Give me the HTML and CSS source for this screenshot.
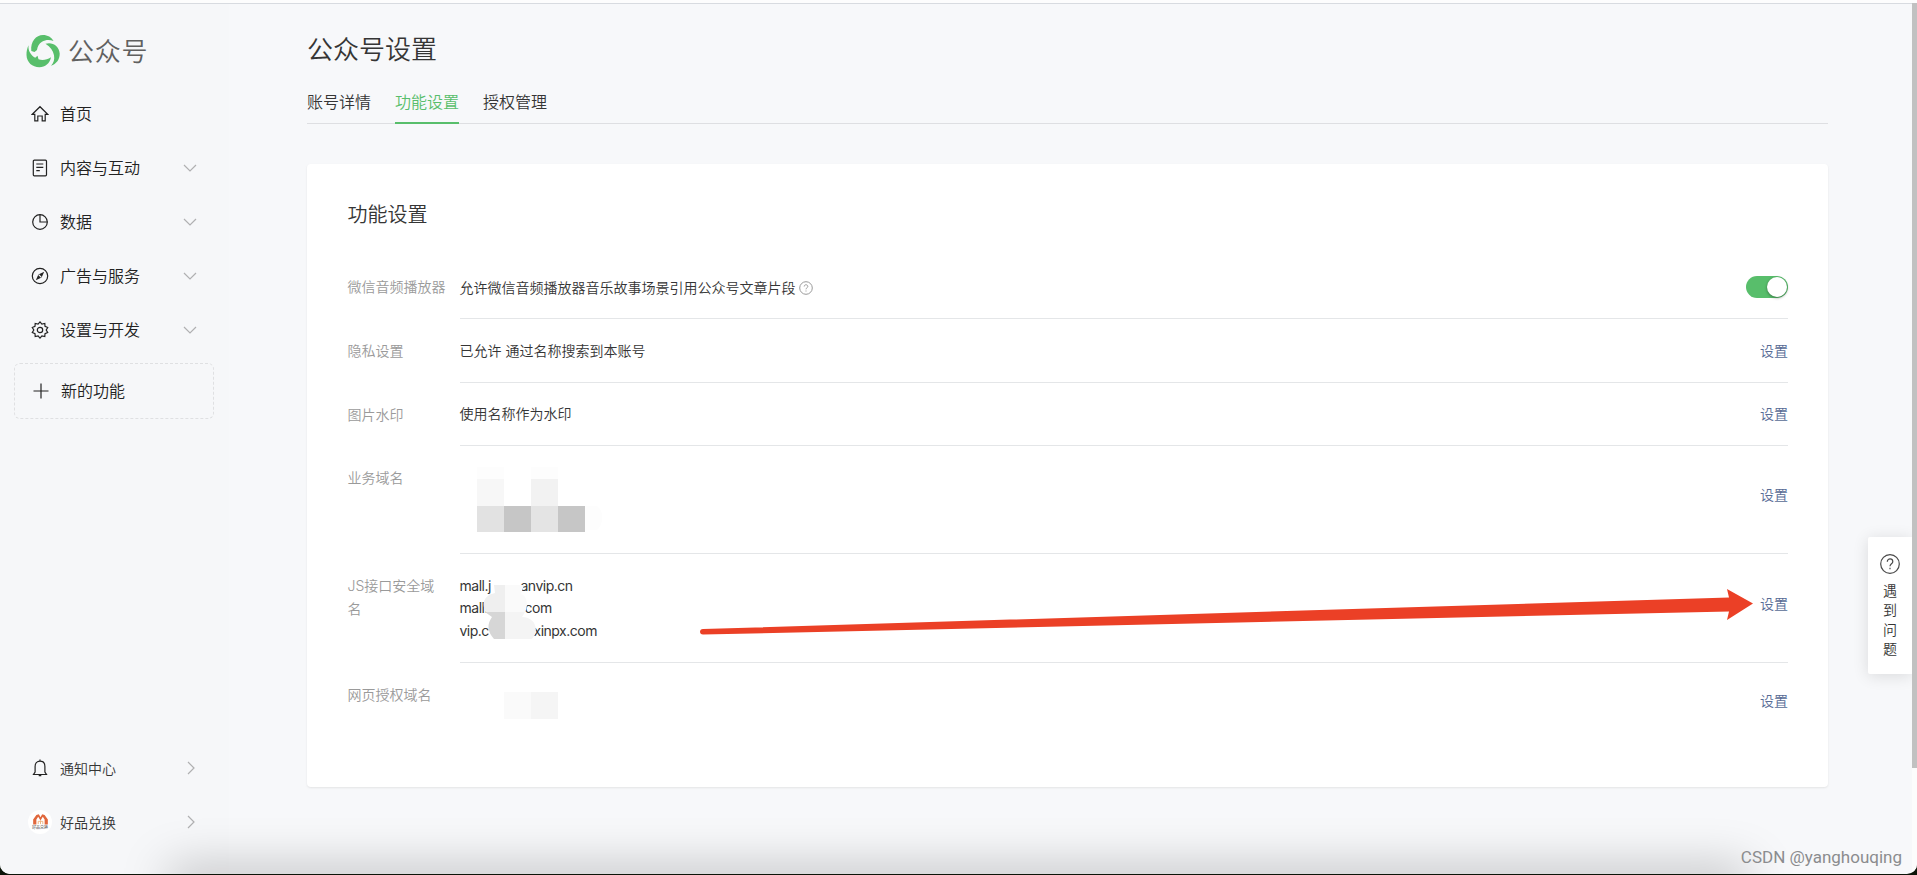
FILE: index.html
```
<!DOCTYPE html>
<html lang="zh-CN">
  <head>
    <meta charset="UTF-8" />
    <meta name="viewport" content="width=device-width, initial-scale=1" />
    <title>公众号</title>
    <link rel="stylesheet" href="styles.css">
  </head>
  <body>
    <div class="window">
      <aside class="sidebar">
        <div class="logo">
          <svg width="34" height="34" viewBox="0 0 34 34" fill="#58be6b">
            <path d="M5.300 17C4.300 7.500 10 1 17 1c4.500 0 8.700 2.300 10.500 6-3.500-1.500-8-1.500-11.500.8-3 2-4.500 4.500-5 8.200L8.500 18z" />
            <path d="M19.500 9.800c6.500-2 13.700 1.700 14.200 9.800.2 5.800-3.300 10.500-8.700 12.200 2.700-3 3.800-6.500 3-10.500-.8-4.500-3.500-8.200-8.500-11.500z" />
            <path d="M2.500 11.300c-.5 5.500 2.200 9.800 6.700 12.500l2.300-2 1 3.500c4 1.300 8.300.6 12.500-2-1.200 6.300-5.900 9.900-11.500 9.900C6.500 33.300.7 28.500.5 21c-.1-3.500.7-6.800 2-9.700z" />
          </svg>
          <span>公众号</span>
        </div>

        <nav class="menu">
          <a class="item">
            <svg class="icon" viewBox="0 0 18 18"><path d="M1.300 9.300 9 1.700l7.700 7.600h-2.500v6.500h-3V11H6.800v4.800h-3V9.300z" /></svg>
            <span>首页</span>
          </a>
          <a class="item">
            <svg class="icon" viewBox="0 0 18 18"><rect x="2.300" y="1.200" width="13.200" height="15.600" rx="1" /><path d="M5.300 5h7M5.300 8.300h7M5.300 11.600h3.500" /></svg>
            <span>内容与互动</span>
            <svg class="arrow" viewBox="0 0 14 14"><path d="m1 4 6 6 6-6" /></svg>
          </a>
          <a class="item">
            <svg class="icon" viewBox="0 0 18 18"><circle cx="9" cy="9" r="7.300" /><path d="M9 1.500V9h7.500" /></svg>
            <span>数据</span>
            <svg class="arrow" viewBox="0 0 14 14"><path d="m1 4 6 6 6-6" /></svg>
          </a>
          <a class="item">
            <svg class="icon" viewBox="0 0 18 18"><circle cx="9" cy="9" r="7.700" /><path class="solid" d="m13.200 4.800-2.600 5.800-5.800 2.600 2.600-5.800z" /><path class="needle" d="m7.600 7.600 2.800 2.800" /></svg>
            <span>广告与服务</span>
            <svg class="arrow" viewBox="0 0 14 14"><path d="m1 4 6 6 6-6" /></svg>
          </a>
          <a class="item">
            <svg class="icon" viewBox="0 0 18 18"><path d="M9 .9 10.900 3.100 13.800 2.500 14 5.400 16.700 6.500 15.200 9 16.700 11.500 14 12.600 13.800 15.500 10.900 14.900 9 17.100 7.100 14.900 4.200 15.500 4 12.600 1.300 11.500 2.800 9 1.300 6.500 4 5.400 4.200 2.500 7.100 3.100z" /><circle cx="9" cy="9" r="2.700" /></svg>
            <span>设置与开发</span>
            <svg class="arrow" viewBox="0 0 14 14"><path d="m1 4 6 6 6-6" /></svg>
          </a>
        </nav>

        <a class="new">
          <svg class="icon" viewBox="0 0 18 18"><path d="M9 1.500v15M1.500 9h15" /></svg>
          <span>新的功能</span>
        </a>

        <div class="bottom">
          <a class="item">
            <svg class="icon" viewBox="0 0 18 18"><path d="M2.500 15.500h13L13.900 13V7.500C13.900 4.300 12 2.200 9 2.200S4.100 4.300 4.100 7.500V13zM9 .4v1.800M7.700 16.700h2.600" /></svg>
            <span>通知中心</span>
            <svg class="arrow" viewBox="0 0 14 14"><path d="m4 1 6 6-6 6" /></svg>
          </a>
          <a class="item">
            <span class="avatar">
              <svg width="15" height="11" viewBox="0 0 16 12"><path d="M0 11.500V6l3.500-5 2.700-.8L8 3.500 9.800.2l2.700.8L16 6v5.500h-3.500V6L10.500 3 8 7 5.500 3l-2 3v5.500z" fill="#e0673c" /><path d="M5.500 11V8h5v3M8 7v4" stroke="#eeb27c" fill="none" /></svg>
              <small>好品兑换</small>
            </span>
            <span>好品兑换</span>
            <svg class="arrow" viewBox="0 0 14 14"><path d="m4 1 6 6-6 6" /></svg>
          </a>
        </div>
      </aside>

      <main class="main">
        <h1>公众号设置</h1>
        <div class="tabs">
          <a>账号详情</a>
          <a class="current">功能设置</a>
          <a>授权管理</a>
        </div>

        <section class="card">
          <h2>功能设置</h2>
          <div class="row first">
            <label>微信音频播放器</label>
            <div class="value">
              <p>允许微信音频播放器音乐故事场景引用公众号文章片段</p>
              <svg class="tip" viewBox="0 0 14 14"><circle cx="7" cy="7" r="6.300" /><path d="M5.200 5.500c0-2.300 3.600-2.300 3.600 0C8.800 6.800 7 6.800 7 8.300M7 9.500v1" /></svg>
              <span class="switch"></span>
            </div>
          </div>
          <div class="row">
            <label>隐私设置</label>
            <div class="value"><p>已允许 通过名称搜索到本账号</p><a>设置</a></div>
          </div>
          <div class="row">
            <label>图片水印</label>
            <div class="value"><p>使用名称作为水印</p><a>设置</a></div>
          </div>
          <div class="row tall">
            <label>业务域名</label>
            <div class="value">
              <svg class="mosaic" width="150" height="68" viewBox="0 0 150 68">
                <path fill="#fdfdfd" d="M17 1h27v12H17zM71 1h27v12H71zM125 40h12c7 5 7 18 0 24h-12z" />
                <path fill="#f7f7f7" d="M17 13h27v27H17z" />
                <path fill="#f2f2f2" d="M71 13h27v27H71z" />
                <path fill="#e2e2e2" d="M17 40h27v26H17z" />
                <path fill="#c6c6c6" d="M44 40h27v26H44zM98 40h27v26H98z" />
                <path fill="#e4e4e4" d="M71 40h27v26H71z" />
              </svg>
              <a>设置</a>
            </div>
          </div>
          <div class="row tall">
            <label>JS接口安全域名</label>
            <div class="value">
              <div class="domains">
                <p><span class="start">mall.j</span><span>anvip.cn</span></p>
                <p><span class="start">mall.</span><span>com</span></p>
                <p><span class="start">vip.c</span><span>xinpx.com</span></p>
                <svg class="smudge" width="54" height="56" viewBox="0 0 54 56">
                  <path fill="#efefef" d="M11 1h11v27H3C-2 20 1 11 12 9z" />
                  <path fill="#fafafa" d="M22 1h19l-3 9c7 2 7 13 4 18H22z" />
                  <path fill="#d6d6d6" d="M22 28v27H11C4 47 4 40 9 33L2 28z" />
                  <path fill="#f4f4f4" d="M22 28h20l-3 5c13 0 18 13 10 22H22z" />
                </svg>
              </div>
              <a>设置</a>
            </div>
          </div>
          <div class="row last">
            <label>网页授权域名</label>
            <div class="value">
              <svg class="mosaic" width="130" height="40" viewBox="0 0 130 40">
                <path fill="#fafafa" d="M44 11h27v27H44z" />
                <path fill="#f5f5f5" d="M71 11h27v27H71z" />
              </svg>
              <a>设置</a>
            </div>
          </div>
        </section>
      </main>

      <div class="help">
        <svg width="22" height="22" viewBox="0 0 22 22"><circle cx="11" cy="11" r="9.300" /><path d="M8.300 8.700c0-3.700 5.500-3.700 5.500 0 0 2-2.800 2.200-2.800 4.500M11 14.700v1.500" /></svg>
        <span>遇到问题</span>
      </div>

      <div class="scrollbar"></div>
      <div class="shade"></div>

      <svg class="pointer" width="1056" height="48" viewBox="0 0 1056 48">
        <path fill="#eb4026" d="M3 40 1029 8.500 1027 0l26 14.500-26 16.500 2-8.500L3 45.500c-4 0-4-5.500 0-5.500z" />
      </svg>
      <div class="watermark">CSDN @yanghouqing</div>
    </div>
  </body>
</html>
```
FILE: styles.css
```
* {
  box-sizing: border-box;
}
body {
  margin: 0;
  height: 875px;
  overflow: hidden;
  background: #0c1408;
  color: #353535;
  font-family: Inter, "Noto Sans CJK SC", sans-serif;
  font-size: 14px;
  font-weight: 350;
}
h1,
h2,
p {
  margin: 0;
  font-weight: inherit;
}
svg {
  flex: none;
}
.window {
  position: relative;
  display: flex;
  height: 874px;
  overflow: hidden;
  background: #f7f8fa;
  border-radius: 0 0 10px 10px;
}
.window::before {
  content: "";
  position: absolute;
  top: 0;
  left: 0;
  right: 0;
  height: 3px;
  background: #fdfdfd;
  border-bottom: 1px solid #d8dbe0;
}

/* sidebar */
.sidebar {
  display: flex;
  flex-direction: column;
  width: 229px;
  padding: 34px 15px 25px 14px;
  background: #f6f7f9;
}
.logo {
  display: flex;
  align-items: center;
  gap: 8px;
  height: 34px;
  padding-left: 12px;
  margin-bottom: 19px;
  color: #606060;
  font-size: 26px;
  letter-spacing: 0.8px;
}
.logo span {
  padding-bottom: 4px;
}
.item {
  display: flex;
  align-items: center;
  height: 54px;
  padding: 0 16px 0 17px;
  font-size: 16px;
  color: #222;
}
.menu span,
.new span {
  padding-bottom: 2px;
}
.icon {
  width: 18px;
  height: 18px;
  margin-right: 11px;
  fill: none;
  stroke: #222;
  stroke-width: 1.2;
}
.solid {
  fill: #222;
  stroke: none;
}
.needle {
  stroke: #f6f7f9;
}
.arrow {
  width: 14px;
  height: 14px;
  margin-left: auto;
  fill: none;
  stroke: #b0b0b2;
  stroke-width: 1.2;
}
.menu .arrow {
  margin-right: 1px;
}
.new {
  display: flex;
  align-items: center;
  height: 56px;
  margin-top: 6px;
  padding-left: 17px;
  border: 1px dashed #dfe0e2;
  border-radius: 6px;
  font-size: 16px;
  color: #222;
}
.bottom {
  margin-top: auto;
}
.bottom .item {
  font-size: 14px;
  color: #353535;
}
.avatar {
  display: flex;
  flex-direction: column;
  align-items: center;
  justify-content: center;
  width: 24px;
  height: 24px;
  margin: 0 8px 0 -3px;
  background: #fff;
  border-radius: 50%;
}
.avatar small {
  font-size: 4px;
  line-height: 6px;
  white-space: nowrap;
}

/* main area */
.main {
  width: 1599px;
  padding: 29px 0 0 78px;
}
h1 {
  font-size: 26px;
  line-height: 42px;
}
.tabs {
  display: flex;
  gap: 24px;
  height: 43px;
  margin-top: 10px;
  border-bottom: 1px solid #dedfe2;
  font-size: 16px;
  line-height: 42px;
}
.tabs .current {
  height: 43px;
  color: #58be6b;
  border-bottom: 2px solid #58be6b;
}
.card {
  height: 623px;
  margin-top: 40px;
  padding: 36px 40px 0 40.5px;
  background: #fff;
  border-radius: 4px;
  box-shadow: 0 1px 2px rgba(150, 150, 150, 0.2);
}
h2 {
  margin-bottom: -1px;
  font-size: 20px;
  line-height: 30px;
}
.row {
  display: flex;
  height: 64px;
}
.row label {
  width: 112px;
  padding: 20px 22px 0 0;
  line-height: 23px;
  color: #9a9a9a;
}
.value {
  display: flex;
  align-items: center;
  flex: 1;
  padding-bottom: 2px;
  border-bottom: 1px solid #e4e6e8;
}
.value a {
  margin-left: auto;
  color: #576b95;
}
.first {
  height: 90px;
}
.first label {
  padding: 46px 0 0;
}
.first .value {
  padding-top: 28px;
}
.row + .row + .row {
  height: 63px;
}
.row.tall.tall {
  height: 108px;
}
.tall + .row.tall {
  height: 109px;
}
.tall a {
  padding-bottom: 9px;
}
.row.last.last {
  height: 75px;
}
.last .value {
  border: 0;
}
.mosaic {
  margin-top: 3px;
}
.tip {
  width: 14px;
  height: 14px;
  margin: 2px 0 0 3px;
  fill: none;
  stroke: #9a9a9a;
}
.switch {
  display: flex;
  justify-content: flex-end;
  width: 42px;
  height: 22px;
  margin-left: auto;
  padding: 1px;
  background: #58be6b;
  border-radius: 11px;
}
.switch::after {
  content: "";
  width: 20px;
  height: 20px;
  background: #fff;
  border-radius: 50%;
  box-shadow: 0 1px 3px rgba(0, 0, 0, 0.4);
}
.domains {
  position: relative;
  padding-top: 3px;
  line-height: 22.6px;
  font-weight: 400;
  letter-spacing: -0.5px;
}
.domains p {
  display: flex;
}
.start {
  width: 61px;
}
.domains p:nth-child(2) .start {
  width: 65px;
}
.domains p:nth-child(3) .start {
  width: 74px;
}
.smudge {
  position: absolute;
  left: 23px;
  top: 12px;
}

/* floating parts */
.help {
  position: absolute;
  top: 537px;
  right: 5px;
  display: flex;
  flex-direction: column;
  align-items: center;
  width: 44px;
  height: 137px;
  padding-top: 16px;
  background: #fff;
  border-radius: 2px 0 0 2px;
  box-shadow: 0 2px 16px rgba(0, 0, 0, 0.12);
}
.help svg {
  fill: none;
  stroke: #4a4a4a;
  stroke-width: 1.2;
}
.help span {
  width: 14px;
  margin-top: 6px;
  line-height: 19.3px;
  word-break: break-all;
}
.scrollbar {
  position: absolute;
  top: 3px;
  right: 0;
  width: 5px;
  height: 871px;
  background: linear-gradient(#c1c1c1 765px, #fcfcfc 765px);
}
.shade {
  position: absolute;
  left: 175px;
  right: 175px;
  bottom: -20px;
  height: 20px;
  box-shadow: 0 0 48px 6px rgba(0, 0, 0, 0.25);
}
.pointer {
  position: absolute;
  left: 700px;
  top: 589px;
}
.watermark {
  position: absolute;
  right: 15px;
  bottom: 6px;
  color: #8b8c8e;
  font: 17px/22px Roboto, sans-serif;
}
```
